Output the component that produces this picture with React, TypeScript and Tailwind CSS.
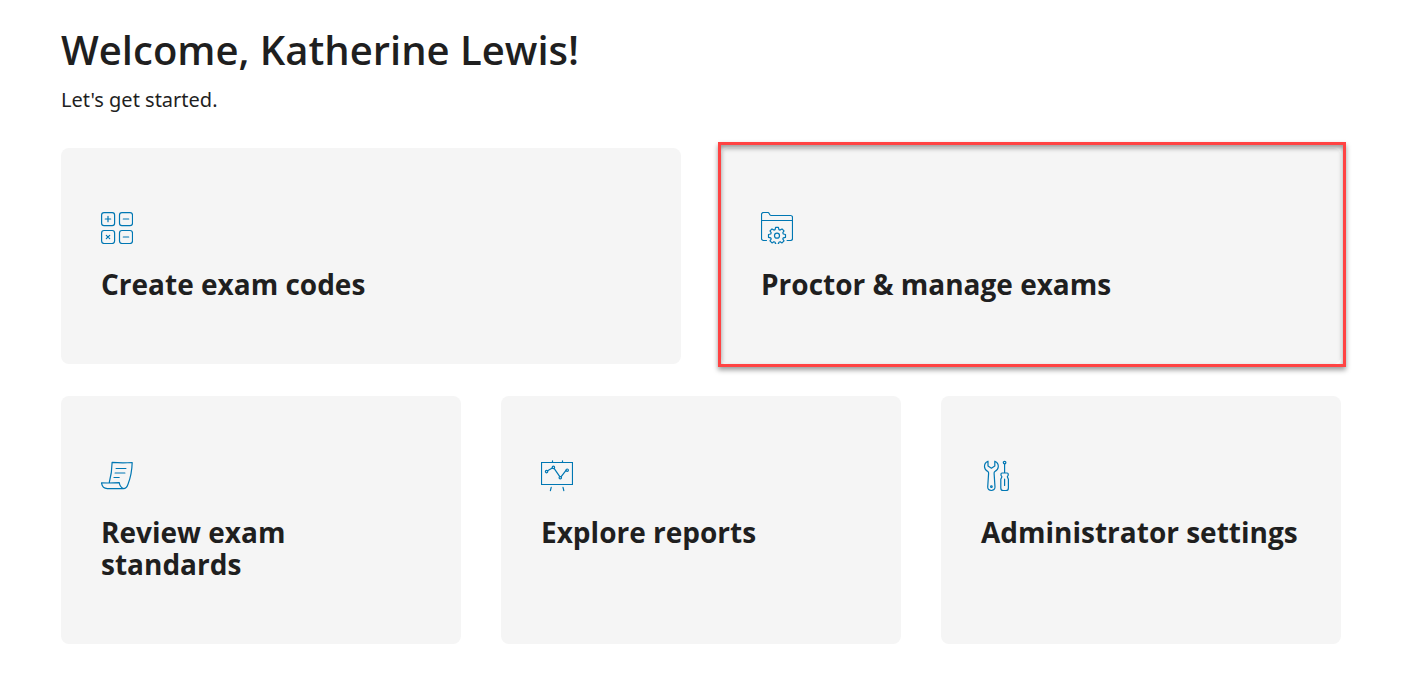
import type { ReactNode } from 'react';
import clsx from 'clsx';

interface Tile {
  label: string;
  href: string;
  icon: ReactNode;
  highlighted?: boolean;
}

const Icon = ({ children }: { children: ReactNode }) => (
  <svg
    viewBox="0 0 32 32"
    className="size-8 text-[#0077b3]"
    fill="none"
    stroke="currentColor"
    strokeWidth="1.2"
    strokeLinecap="round"
    strokeLinejoin="round"
    aria-hidden="true"
  >
    {children}
  </svg>
);

const CodesIcon = () => (
  <Icon>
    <rect x="0.6" y="0.6" width="13" height="13" rx="2.4" />
    <rect x="18.5" y="0.6" width="13" height="13" rx="2.4" />
    <rect x="0.6" y="18.5" width="13" height="13" rx="2.4" />
    <rect x="18.5" y="18.5" width="13" height="13" rx="2.4" />
    <path d="M4.3 7h5.4M7 4.3v5.4M22.3 7h5.4M5.3 23.3l3.4 3.4M8.7 23.3l-3.4 3.4M22.3 25h5.4" />
  </Icon>
);

const ProctorIcon = () => (
  <Icon>
    <path d="M5.5 28.5h-3a2 2 0 0 1-2-2v-24a2 2 0 0 1 2-2h4.2q1 0 1.5 1l.7 1.3q.4.7 1.3.7h19.3a2 2 0 0 1 2 2v21a2 2 0 0 1-2 2h-3.4M.5 8.5h31" />
    <circle cx="16" cy="23.7" r="2.5" />
    <path d="M14.6 16h2.8l.5 2.2 1.2.5 1.9-1.2 2 2-1.2 1.9.5 1.2 2.2.5v2.8l-2.2.5-.5 1.2 1.2 1.9-2 2-1.9-1.2-1.2.5-.5 2.2h-2.8l-.5-2.2-1.2-.5-1.9 1.2-2-2 1.2-1.9-.5-1.2-2.2-.5v-2.8l2.2-.5.5-1.2-1.2-1.9 2-2 1.9 1.2 1.2-.5z" transform="translate(0 -.6)" />
  </Icon>
);

const StandardsIcon = () => (
  <Icon>
    <path d="M8.3 22.3C10 16 11 10 11.1 2.4q10 .7 20.1.1C31 10 29.6 17.5 27 24.3q-1.4 4.3-4.6 4.3H6.3C3 28.6 1 26.5.5 22.9q9 .3 17.8-.2.5 4 4.1 5.9" />
    <path d="M15.1 8.5h9.8M14.1 13h9.8M13 17.5h5.2" />
  </Icon>
);

const ReportsIcon = () => (
  <Icon>
    <rect x="0.5" y="2.5" width="31" height="22" />
    <path d="M11.5.8v1.7M21.5.8v1.7M10.2 27.4l-.8 3.3M22 27.4l.8 3.3" />
    <path d="M6.6 10.8l4.7-2.9M13.1 8.3l5.5 8M20 16.8l5-6.4" />
    <circle cx="5.6" cy="11.6" r="1.2" />
    <circle cx="12.4" cy="7.4" r="1.2" />
    <circle cx="19.3" cy="17.7" r="1.2" />
    <circle cx="26.2" cy="10.2" r="1.2" />
  </Icon>
);

const SettingsIcon = () => (
  <Icon>
    <path d="M7 1.2C4.7 2.1 3.4 4.3 3.5 6.8c.1 2.2 1.5 3.8 3.3 4.8.7.5.9 1 .8 1.8L6.7 27.1c-.1 2 1.5 3.4 3.6 3.4s3.8-1.4 3.7-3.4l-.9-13.7c-.1-.8.2-1.4.8-1.8 1.8-1 3.3-2.6 3.4-4.8.1-2.5-1.2-4.7-3.5-5.6v4.9L10.4 8.2 7 6.1z" />
    <circle cx="10.4" cy="26.7" r="0.8" />
    <circle cx="23.6" cy="2.6" r="1.3" />
    <path d="M23.6 4v9M23.6 19.2v6.3M21 13h5.2q1 0 1 1.1v1.2l-.9 1.4 1.1 2.6v8.6q0 2.6-2.4 2.6h-2.8q-2.4 0-2.4-2.6v-8.6l1.1-2.6-.9-1.4v-1.2q0-1.1 1-1.1z" />
  </Icon>
);

const primaryTiles: Tile[] = [
  { label: 'Create exam codes', href: '#codes', icon: <CodesIcon /> },
  { label: 'Proctor & manage exams', href: '#exams', icon: <ProctorIcon />, highlighted: true },
];

const secondaryTiles: Tile[] = [
  { label: 'Review exam standards', href: '#standards', icon: <StandardsIcon /> },
  { label: 'Explore reports', href: '#reports', icon: <ReportsIcon /> },
  { label: 'Administrator settings', href: '#settings', icon: <SettingsIcon /> },
];

const TileCard = ({ tile }: { tile: Tile }) => (
  <a
    href={tile.href}
    className={clsx('block rounded-lg bg-[#f5f5f5] px-10 py-16', tile.highlighted && 'relative')}
  >
    {tile.icon}
    <h2 className="mt-6 text-[28px] leading-8 font-bold">{tile.label}</h2>
    {tile.highlighted && (
      <span className="pointer-events-none absolute -top-1.5 -right-[5px] -bottom-[3px] -left-[3px] border-3 border-[#ff4343] shadow-[0_3px_5px_rgba(0,0,0,0.4),inset_0_3px_5px_rgba(0,0,0,0.4)]" />
    )}
  </a>
);

const App = () => {
  return (
    <main className="pt-6 pr-4 pb-8 font-['Open_Sans',sans-serif] text-[#1f1f1f]">
      <div className="mx-auto max-w-7xl">
        {/* Greeting */}
        <header>
          <h1 className="text-[40px] leading-[52px] font-semibold">Welcome, Katherine Lewis!</h1>
          <p className="mt-2 font-['Noto_Sans',sans-serif] text-xl leading-8">Let's get started.</p>
        </header>

        {/* Main actions */}
        <div className="mt-8 grid gap-x-10 gap-y-8 md:grid-cols-2">
          {primaryTiles.map((tile) => (
            <TileCard key={tile.label} tile={tile} />
          ))}
        </div>

        {/* Other sections */}
        <div className="mt-8 grid gap-x-10 gap-y-8 md:grid-cols-3">
          {secondaryTiles.map((tile) => (
            <TileCard key={tile.label} tile={tile} />
          ))}
        </div>
      </div>
    </main>
  );
};

export default App;
